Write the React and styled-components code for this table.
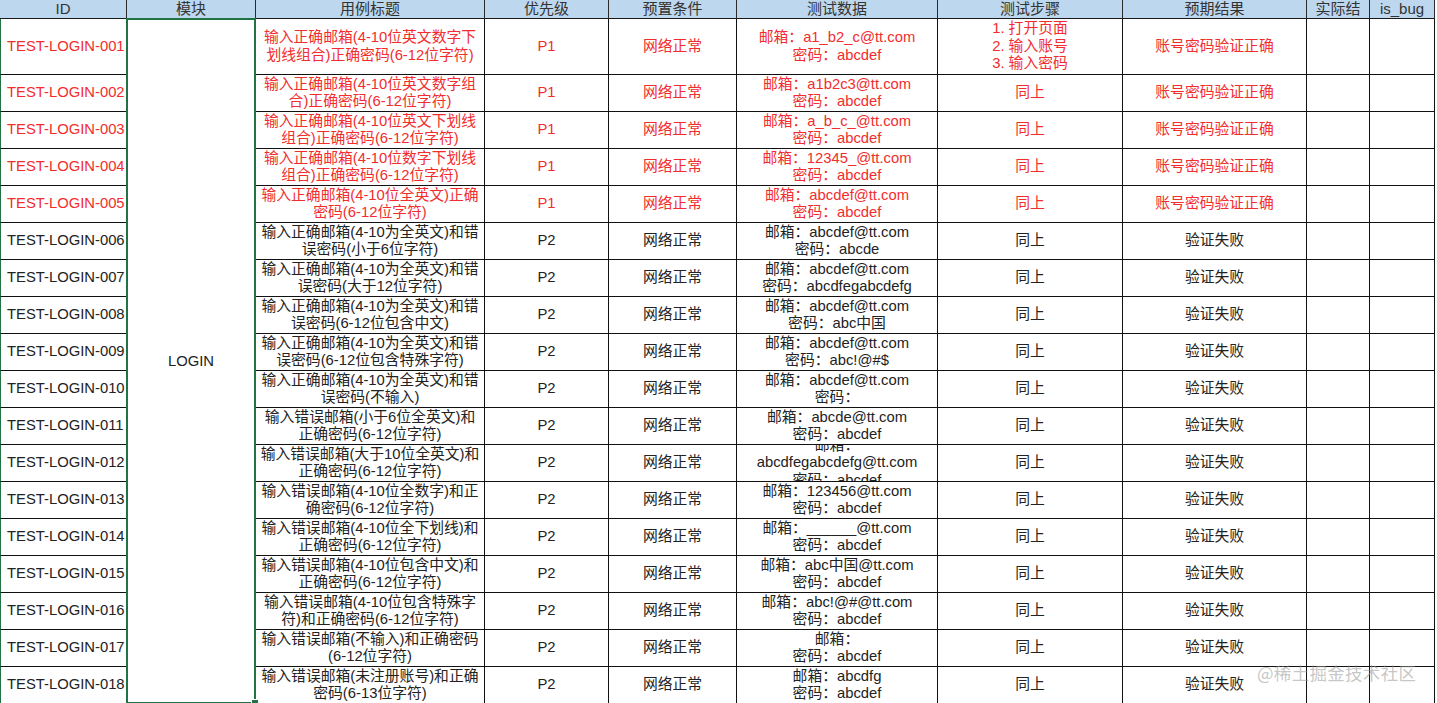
import React from "react";
import styled, { createGlobalStyle } from "styled-components";

const Global = createGlobalStyle`
  html, body { margin: 0; padding: 0; background: #ffffff; }
  body { font-family: "Liberation Sans", "Noto Sans CJK SC", sans-serif; overflow: hidden; }
`;

const Page = styled.div`
  position: relative;
  width: 1437px;
  height: 703px;
  overflow: hidden;
`;

const Sheet = styled.div`
  display: grid;
  grid-template-columns: 127px 129px 229px 124px 128px 201px 185px 184px 63px 65px;
  grid-template-rows: 19px 56px repeat(17, 37px);
  font-size: 14.8px;
  line-height: 17.5px;
`;

const HeadCell = styled.div`
  box-sizing: border-box;
  background: #bdd7ee;
  border-right: 1px solid #2a2a2a;
  border-bottom: 1px solid #1a1a1a;
  color: #333;
  font-size: 15px;
  line-height: 18px;
  text-align: center;
  white-space: nowrap;
  overflow: hidden;
`;

const Cell = styled.div`
  box-sizing: border-box;
  border-right: 1px solid #111;
  border-bottom: 1px solid #111;
  border-left: ${(p) => (p.$edge ? "1px solid #217346" : "none")};
  display: flex;
  flex-direction: column;
  align-items: ${(p) => (p.$left ? "flex-start" : "center")};
  justify-content: center;
  padding-left: ${(p) => (p.$left ? "6px" : "0")};
  text-align: center;
  color: ${(p) => (p.$red ? "#f22d2d" : "#222")};
  white-space: nowrap;
  overflow: hidden;
`;

const ModuleCell = styled.div`
  grid-column: 2;
  grid-row: 2 / span 18;
  position: relative;
  box-sizing: border-box;
  border-right: 1px solid #111;
  display: flex;
  align-items: center;
  justify-content: center;
  color: #222;

  &::after {
    content: "";
    position: absolute;
    left: -1px;
    top: -1px;
    right: -1px;
    bottom: 0;
    border: 2px solid #217346;
    pointer-events: none;
  }
  &::before {
    content: "";
    position: absolute;
    right: -4px;
    bottom: -3px;
    width: 6px;
    height: 6px;
    background: #217346;
    border: 1px solid #fff;
    z-index: 2;
  }
`;

const Line = styled.span`
  display: block;
`;

const Watermark = styled.div`
  position: absolute;
  left: 1257px;
  top: 662px;
  font-family: "Noto Sans CJK SC", sans-serif;
  font-size: 17.5px;
  line-height: 22px;
  color: rgba(150, 150, 150, 0.55);
  pointer-events: none;
  letter-spacing: 0.3px;
`;

const headers = ["ID", "模块", "用例标题", "优先级", "预置条件", "测试数据", "测试步骤", "预期结果", "实际结", "is_bug"];

const rows = [
  [["输入正确邮箱(4-10位英文数字下", "划线组合)正确密码(6-12位字符)"], ["邮箱：a1_b2_c@tt.com", "密码：abcdef"]],
  [["输入正确邮箱(4-10位英文数字组", "合)正确密码(6-12位字符)"], ["邮箱：a1b2c3@tt.com", "密码：abcdef"]],
  [["输入正确邮箱(4-10位英文下划线", "组合)正确密码(6-12位字符)"], ["邮箱：a_b_c_@tt.com", "密码：abcdef"]],
  [["输入正确邮箱(4-10位数字下划线", "组合)正确密码(6-12位字符)"], ["邮箱：12345_@tt.com", "密码：abcdef"]],
  [["输入正确邮箱(4-10位全英文)正确", "密码(6-12位字符)"], ["邮箱：abcdef@tt.com", "密码：abcdef"]],
  [["输入正确邮箱(4-10为全英文)和错", "误密码(小于6位字符)"], ["邮箱：abcdef@tt.com", "密码：abcde"]],
  [["输入正确邮箱(4-10为全英文)和错", "误密码(大于12位字符)"], ["邮箱：abcdef@tt.com", "密码：abcdfegabcdefg"]],
  [["输入正确邮箱(4-10为全英文)和错", "误密码(6-12位包含中文)"], ["邮箱：abcdef@tt.com", "密码：abc中国"]],
  [["输入正确邮箱(4-10为全英文)和错", "误密码(6-12位包含特殊字符)"], ["邮箱：abcdef@tt.com", "密码：abc!@#$"]],
  [["输入正确邮箱(4-10为全英文)和错", "误密码(不输入)"], ["邮箱：abcdef@tt.com", "密码："]],
  [["输入错误邮箱(小于6位全英文)和", "正确密码(6-12位字符)"], ["邮箱：abcde@tt.com", "密码：abcdef"]],
  [["输入错误邮箱(大于10位全英文)和", "正确密码(6-12位字符)"], ["邮箱：", "abcdfegabcdefg@tt.com", "密码：abcdef"]],
  [["输入错误邮箱(4-10位全数字)和正", "确密码(6-12位字符)"], ["邮箱：123456@tt.com", "密码：abcdef"]],
  [["输入错误邮箱(4-10位全下划线)和", "正确密码(6-12位字符)"], ["邮箱：______@tt.com", "密码：abcdef"]],
  [["输入错误邮箱(4-10位包含中文)和", "正确密码(6-12位字符)"], ["邮箱：abc中国@tt.com", "密码：abcdef"]],
  [["输入错误邮箱(4-10位包含特殊字", "符)和正确密码(6-12位字符)"], ["邮箱：abc!@#@tt.com", "密码：abcdef"]],
  [["输入错误邮箱(不输入)和正确密码", "(6-12位字符)"], ["邮箱：", "密码：abcdef"]],
  [["输入错误邮箱(未注册账号)和正确", "密码(6-13位字符)"], ["邮箱：abcdfg", "密码：abcdef"]],
];

const Lines = ({ items }) => items.map((t, i) => <Line key={i}>{t}</Line>);

export default function App() {
  return (
    <Page>
      <Global />
      <Sheet>
        {headers.map((h) => (
          <HeadCell key={h}>{h}</HeadCell>
        ))}
        <ModuleCell>LOGIN</ModuleCell>
        {rows.map(([title, data], i) => {
          const red = i < 5;
          const id = `TEST-LOGIN-${String(i + 1).padStart(3, "0")}`;
          return (
            <React.Fragment key={id}>
              <Cell $left $edge $red={red}>{id}</Cell>
              <Cell $red={red}><Lines items={title} /></Cell>
              <Cell $red={red}>{red ? "P1" : "P2"}</Cell>
              <Cell $red={red}>网络正常</Cell>
              <Cell $red={red}><Lines items={data} /></Cell>
              <Cell $red={red}>
                {i === 0 ? <Lines items={["1. 打开页面", "2. 输入账号", "3. 输入密码"]} /> : "同上"}
              </Cell>
              <Cell $red={red}>{red ? "账号密码验证正确" : "验证失败"}</Cell>
              <Cell />
              <Cell />
            </React.Fragment>
          );
        })}
      </Sheet>
      <Watermark>@稀土掘金技术社区</Watermark>
    </Page>
  );
}
